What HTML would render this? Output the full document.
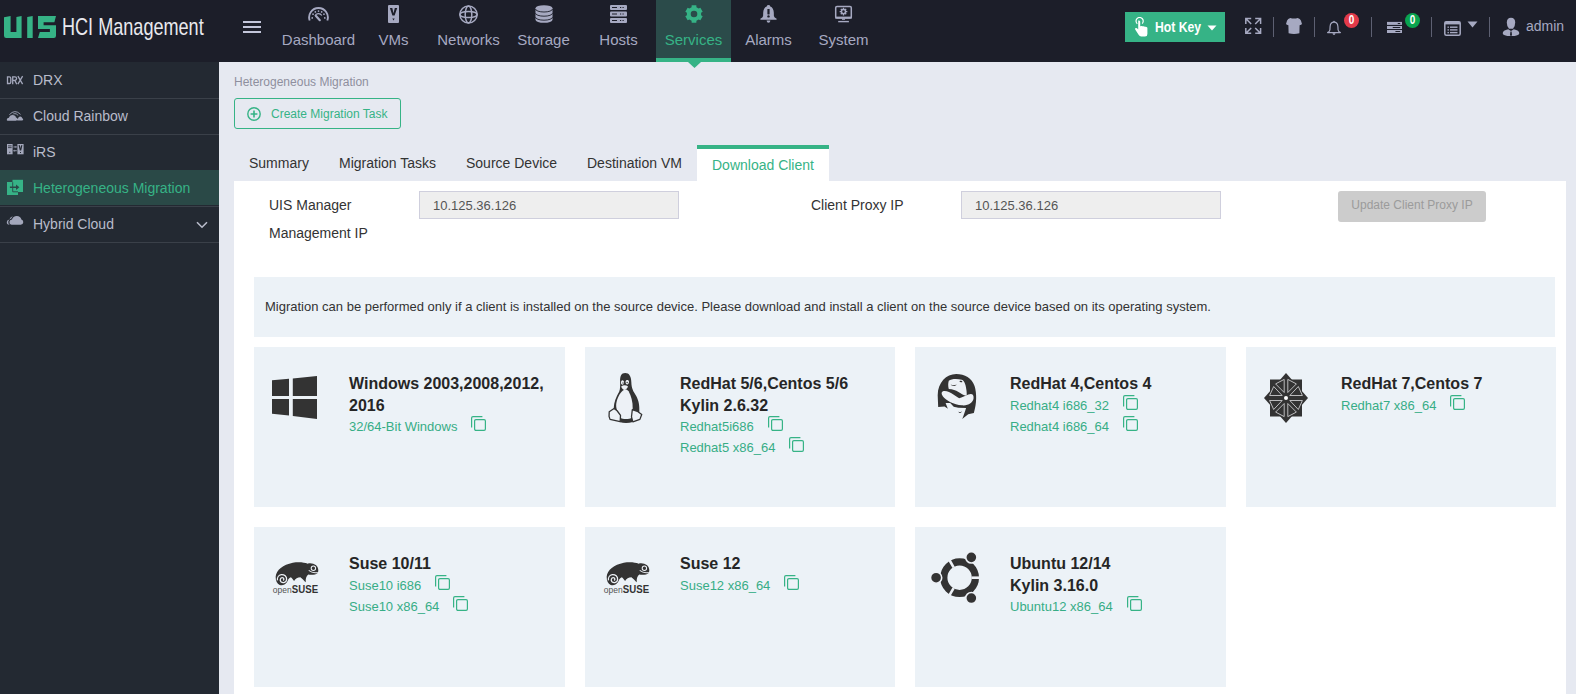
<!DOCTYPE html>
<html><head><meta charset="utf-8">
<style>
*{margin:0;padding:0;box-sizing:border-box}
html,body{width:1576px;height:694px;overflow:hidden;background:#e6e9f1;font-family:"Liberation Sans",sans-serif}
.a{position:absolute;white-space:nowrap}
#hdr{position:absolute;left:0;top:0;width:1576px;height:62px;background:#1c1e29}
#side{position:absolute;left:0;top:62px;width:219px;height:632px;background:#232932}
#vline{position:absolute;left:219px;top:62px;width:1px;height:632px;background:#f4f5f9}
.nav{position:absolute;top:32px;width:75px;text-align:center;font-size:15px;line-height:15px;color:#a6a9c1}
.ico{position:absolute}
.sep{position:absolute;top:17px;width:1px;height:20px;background:#5d6072}
.si{position:absolute;left:33px;font-size:14px;line-height:14px;color:#b9bccb}
.sl{position:absolute;left:0;width:219px;height:1px;background:#3a4049}
.tab{position:absolute;top:156px;font-size:14px;line-height:14px;color:#333}
.lbl{position:absolute;font-size:14px;line-height:14px;color:#333}
.inp{position:absolute;top:191px;width:260px;height:28px;background:#eeeeee;border:1px solid #cfcfdd}
.inp span{position:absolute;left:13px;top:7px;font-size:13px;line-height:13px;color:#555}
.card{position:absolute;width:311px;height:160px;background:#ecf2f7}
.ct{position:absolute;left:95px;font-size:16px;line-height:16px;font-weight:bold;color:#262626;white-space:nowrap}
.lk{position:absolute;left:95px;font-size:13px;line-height:13px;color:#37ad86;white-space:nowrap}
.lk svg{vertical-align:baseline;margin-left:14px;margin-top:-15px}
</style></head><body>
<div id="hdr"></div>
<!-- logo -->
<svg class="ico" style="left:4px;top:16px" width="52" height="22" viewBox="0 0 52 22">
<path fill="#36b386" d="M0 1.2 L6.6 0 L6.6 16 L12.4 16 L12.4 0.9 L17.6 0 L17.6 22 L2.2 22 Q0 22 0 19.8 Z"/>
<path fill="#36b386" d="M23.2 1 L28.7 0 L28.7 22 L23.2 22 Z"/>
<path fill="#36b386" d="M34 0 L52 0 L50.4 6.2 L39.6 6.2 L39.6 9.3 L52 9.3 L52 19.8 Q52 22 49.8 22 L34 22 L35.8 16 L45.9 16 L45.9 12.9 L34 12.9 Z"/>
</svg>
<div class="a" style="left:62px;top:16px;font-size:23.4px;line-height:23.4px;color:#e9e9ee;transform-origin:0 0;transform:scaleX(0.773)">HCI Management</div>
<!-- hamburger -->
<div class="ico" style="left:243px;top:21px;width:18px;height:2px;background:#c3c6da"></div>
<div class="ico" style="left:243px;top:26px;width:18px;height:2px;background:#c3c6da"></div>
<div class="ico" style="left:243px;top:31px;width:18px;height:2px;background:#c3c6da"></div>
<!-- services active -->
<div class="ico" style="left:656px;top:0;width:75px;height:58px;background:#2b4b4a"></div>
<div class="ico" style="left:656px;top:58px;width:75px;height:4px;background:#36b386"></div>
<svg class="ico" style="left:688px;top:62px" width="13" height="6" viewBox="0 0 13 6"><path d="M0 0 L13 0 L6.5 6 Z" fill="#36b386"/></svg>
<div class="nav" style="left:281px">Dashboard</div>
<div class="nav" style="left:356px">VMs</div>
<div class="nav" style="left:431px">Networks</div>
<div class="nav" style="left:506px">Storage</div>
<div class="nav" style="left:581px">Hosts</div>
<div class="nav" style="left:656px;color:#36b386">Services</div>
<div class="nav" style="left:731px">Alarms</div>
<div class="nav" style="left:806px">System</div>
<!-- dashboard icon -->
<svg class="ico" style="left:307px;top:5px" width="23" height="17" viewBox="0 0 23 17">
<path d="M2.71 15.55 A9.35 9.35 0 1 1 20.29 15.55" fill="none" stroke="#a6a9c1" stroke-width="1.9"/>
<g fill="#a6a9c1"><circle cx="5.22" cy="12.90" r="0.85"/><circle cx="6.04" cy="9.20" r="0.85"/><circle cx="8.35" cy="6.89" r="0.85"/><circle cx="11.50" cy="6.05" r="0.85"/><circle cx="14.65" cy="6.89" r="0.85"/><circle cx="16.96" cy="9.20" r="0.85"/><circle cx="17.78" cy="12.90" r="0.85"/></g>
<path d="M9 11 L12.8 15.2" stroke="#a6a9c1" stroke-width="2.2" stroke-linecap="round"/>
<path d="M7.93 11.05 A3.8 3.8 0 0 1 14.79 10.45" fill="none" stroke="#a6a9c1" stroke-width="1.2"/>
</svg>
<!-- VMs icon -->
<svg class="ico" style="left:388px;top:5px" width="11" height="18" viewBox="0 0 11 18">
<rect x="0" y="0" width="11" height="18" rx="1" fill="#a6a9c1"/>
<path d="M1.9 3.1 H4.3 L5.5 8.2 L6.8 3.1 H9.2 L6.6 10.5 H4.4 Z" fill="#1c1e29"/>
<path d="M4.3 13.6 H6.7 L5.5 15.6 Z" fill="#1c1e29"/>
</svg>
<!-- networks -->
<svg class="ico" style="left:459px;top:5px" width="19" height="19" viewBox="0 0 19 19">
<g fill="none" stroke="#a6a9c1" stroke-width="1.5">
<circle cx="9.5" cy="9.5" r="8.6"/><ellipse cx="9.5" cy="9.5" rx="3.3" ry="8.6"/><ellipse cx="9.5" cy="9.5" rx="8.6" ry="3"/>
</g></svg>
<!-- storage -->
<svg class="ico" style="left:535px;top:5px" width="18" height="18" viewBox="0 0 18 18">
<path fill="#a6a9c1" d="M0.5 3.2 A8.5 3 0 0 1 17.5 3.2 L17.5 14.8 A8.5 3 0 0 1 0.5 14.8 Z"/>
<g fill="none" stroke="#1c1e29" stroke-width="0.9"><path d="M0.5 4 A8.5 3 0 0 0 17.5 4"/><path d="M0.5 8.2 A8.5 3 0 0 0 17.5 8.2"/><path d="M0.5 12.2 A8.5 3 0 0 0 17.5 12.2"/></g>
</svg>
<!-- hosts -->
<svg class="ico" style="left:610px;top:5px" width="17" height="18" viewBox="0 0 17 18">
<g fill="#a6a9c1"><rect x="0" y="0" width="17" height="5" rx="1"/><rect x="0" y="6.5" width="17" height="5" rx="1"/><rect x="0" y="13" width="17" height="5" rx="1"/></g>
<g fill="#1c1e29"><rect x="2" y="2" width="5" height="1"/><rect x="10" y="2" width="1.2" height="1"/><rect x="12.5" y="2" width="1.2" height="1"/>
<rect x="2" y="8.5" width="5" height="1"/><rect x="10" y="8.5" width="1.2" height="1"/><rect x="12.5" y="8.5" width="1.2" height="1"/>
<rect x="2" y="15" width="5" height="1"/><rect x="10" y="15" width="1.2" height="1"/><rect x="12.5" y="15" width="1.2" height="1"/></g>
</svg>
<!-- services gear -->
<svg class="ico" style="left:684.5px;top:5px" width="18" height="18" viewBox="0 0 18 18"><path fill="#36b386" fill-rule="evenodd" d="M11.44 2.23 L11.33 0.31 L6.67 0.31 L6.56 2.23 L4.35 3.50 L2.64 2.64 L0.31 6.67 L1.91 7.72 L1.91 10.28 L0.31 11.33 L2.64 15.36 L4.35 14.50 L6.56 15.77 L6.67 17.69 L11.33 17.69 L11.44 15.77 L13.65 14.50 L15.36 15.36 L17.69 11.33 L16.09 10.28 L16.09 7.72 L17.69 6.67 L15.36 2.64 L13.65 3.50 Z M9.00 5.70 A3.30 3.30 0 1 0 9.00 12.30 A3.30 3.30 0 1 0 9.00 5.70 Z"/></svg>
<!-- alarms bell -->
<svg class="ico" style="left:759px;top:4px" width="19" height="20" viewBox="759 4 19 20">
<path fill="#a6a9c1" d="M768.5 5 Q770 5 770.3 6.4 Q773.6 7.6 773.8 12.5 L773.9 16 Q774.3 17.6 776.3 18.6 Q777.2 19.4 776.2 19.8 L760.8 19.8 Q759.8 19.4 760.7 18.6 Q762.7 17.6 763.1 16 L763.2 12.5 Q763.4 7.6 766.7 6.4 Q767 5 768.5 5 Z"/>
<path fill="#a6a9c1" d="M766.6 20.6 H770.4 Q770.2 22.8 768.5 22.8 Q766.8 22.8 766.6 20.6 Z"/>
<rect x="767.4" y="9" width="2.2" height="5.4" rx="0.4" fill="#1c1e29"/><circle cx="768.5" cy="16.4" r="1.2" fill="#1c1e29"/>
</svg>
<!-- system -->
<svg class="ico" style="left:834px;top:5px" width="20" height="19" viewBox="834 5 20 19">
<rect x="835.7" y="6.5" width="15.6" height="11.6" rx="1.3" fill="none" stroke="#a6a9c1" stroke-width="1.5"/>
<rect x="835.2" y="16.6" width="16.6" height="2" fill="#a6a9c1"/>
<rect x="842" y="18.4" width="3" height="1.4" fill="#a6a9c1"/>
<rect x="838.2" y="20.9" width="10.7" height="1.4" fill="#a6a9c1"/>
<path fill="#a6a9c1" fill-rule="evenodd" d="M844.19 8.78 L844.19 7.76 L842.81 7.76 L842.81 8.78 L841.99 9.12 L841.27 8.40 L840.30 9.37 L841.02 10.09 L840.68 10.91 L839.66 10.91 L839.66 12.29 L840.68 12.29 L841.02 13.11 L840.30 13.83 L841.27 14.80 L841.99 14.08 L842.81 14.42 L842.81 15.44 L844.19 15.44 L844.19 14.42 L845.01 14.08 L845.73 14.80 L846.70 13.83 L845.98 13.11 L846.32 12.29 L847.34 12.29 L847.34 10.91 L846.32 10.91 L845.98 10.09 L846.70 9.37 L845.73 8.40 L845.01 9.12 Z M843.50 10.30 A1.30 1.30 0 1 0 843.50 12.90 A1.30 1.30 0 1 0 843.50 10.30 Z"/>
</svg>
<!-- hot key -->
<div class="ico" style="left:1125px;top:12px;width:100px;height:30px;background:#36b386"></div>
<svg class="ico" style="left:1134px;top:17px" width="16" height="20" viewBox="0 0 16 20">
<path fill="none" stroke="#fff" stroke-width="1.2" d="M3.3 6.8 A3.6 3.6 0 1 1 8.2 6.6"/>
<path fill="#fff" d="M4.2 3.6 Q5.8 3.2 6.2 4.6 L6.2 9.2 Q7.5 8.6 8.6 9.3 Q10 8.8 11 9.8 Q12.6 9.5 13.4 10.8 L13.4 17 Q13.4 19.5 11 19.5 L7.2 19.5 Q5.6 19.5 4.6 17.8 L1.2 12.6 Q0.6 11.4 1.8 11 Q2.8 10.7 3.8 12 L4.2 12.6 Z"/>
</svg>
<div class="a" style="left:1155px;top:20px;font-size:14px;line-height:14px;font-weight:bold;color:#fff;transform-origin:0 0;transform:scaleX(0.87)">Hot Key</div>
<svg class="ico" style="left:1207px;top:25px" width="10" height="6" viewBox="0 0 10 6"><path d="M0.5 0.5 H9.5 L5 5.5 Z" fill="#fff"/></svg>
<!-- fullscreen -->
<svg class="ico" style="left:1244px;top:17px" width="19" height="19" viewBox="1244 17 19 19">
<g fill="none" stroke="#a6a9c1" stroke-width="1.5">
<path d="M1245.8 24 V18.6 H1251.2 M1246 18.8 L1251.2 24"/>
<path d="M1255.2 18.6 H1260.6 V24 M1260.4 18.8 L1255.2 24"/>
<path d="M1245.8 28 V33.3 H1251.2 M1246 33.1 L1251.2 28"/>
<path d="M1255.2 33.3 H1260.6 V28 M1260.4 33.1 L1255.2 28"/>
</g></svg>
<div class="sep" style="left:1273px"></div>
<!-- tshirt -->
<svg class="ico" style="left:1284px;top:16px" width="20" height="20" viewBox="1284 16 20 20">
<path fill="#a6a9c1" d="M1290.3 18 Q1294 19 1297.7 18 Q1300.2 18.6 1300.9 20.4 L1302 24 Q1301.4 25 1299.6 25.2 L1299.4 33.2 Q1294 34.6 1288.6 33.2 L1288.4 25.2 Q1286.6 25 1286 24 L1287.1 20.4 Q1287.8 18.6 1290.3 18 Z"/>
</svg>
<div class="sep" style="left:1314px"></div>
<!-- bell -->
<svg class="ico" style="left:1325px;top:19px" width="18" height="18" viewBox="1325 19 18 18">
<path fill="none" stroke="#a6a9c1" stroke-width="1.2" stroke-linejoin="round" d="M1334 22.2 Q1337.6 22.2 1337.9 26.5 L1338.1 30 Q1338.4 31.6 1340.4 32.6 L1327.6 32.6 Q1329.6 31.6 1329.9 30 L1330.1 26.5 Q1330.4 22.2 1334 22.2 Z"/>
<circle cx="1334" cy="21.5" r="0.8" fill="#a6a9c1"/>
<path fill="#a6a9c1" d="M1332.5 33.2 H1335.5 Q1335.3 35 1334 35 Q1332.7 35 1332.5 33.2 Z"/>
</svg>
<svg class="ico" style="left:1344px;top:13px" width="15" height="15" viewBox="0 0 15 15"><circle cx="7.5" cy="7.5" r="7.5" fill="#e33a49"/>
<text x="7.5" y="10.9" text-anchor="middle" font-family="Liberation Sans" font-weight="bold" font-size="12.5" fill="#fff" transform="translate(7.5 0) scale(0.8 1) translate(-7.5 0)">0</text></svg>
<div class="sep" style="left:1371px"></div>
<!-- server -->
<svg class="ico" style="left:1386px;top:20px" width="18" height="15" viewBox="1386 20 18 15">
<g fill="#a6a9c1"><rect x="1387" y="21.9" width="15" height="3"/><rect x="1387" y="26" width="15" height="3"/><rect x="1387" y="30" width="15" height="3"/></g>
<g fill="#1c1e29"><rect x="1397.6" y="22.9" width="2.8" height="1" rx="0.5"/><rect x="1392.6" y="27" width="7.8" height="1" rx="0.5"/><rect x="1395.3" y="31" width="5.1" height="1" rx="0.5"/></g>
</svg>
<svg class="ico" style="left:1405px;top:13px" width="15" height="15" viewBox="0 0 15 15"><circle cx="7.5" cy="7.5" r="7.5" fill="#0aa44f"/>
<text x="7.5" y="10.9" text-anchor="middle" font-family="Liberation Sans" font-weight="bold" font-size="12.5" fill="#fff" transform="translate(7.5 0) scale(0.8 1) translate(-7.5 0)">0</text></svg>
<div class="sep" style="left:1431px"></div>
<!-- window list -->
<svg class="ico" style="left:1444px;top:21px" width="17" height="15" viewBox="0 0 17 15">
<rect x="0.8" y="0.8" width="15.4" height="13.4" rx="1.5" fill="none" stroke="#a6a9c1" stroke-width="1.5"/>
<rect x="0.8" y="0.8" width="15.4" height="2.6" fill="#a6a9c1"/>
<g fill="#a6a9c1"><rect x="3.5" y="5.5" width="1.4" height="1.4"/><rect x="6" y="5.5" width="7.5" height="1.4"/><rect x="3.5" y="8.2" width="1.4" height="1.4"/><rect x="6" y="8.2" width="7.5" height="1.4"/><rect x="3.5" y="10.9" width="1.4" height="1.4"/><rect x="6" y="10.9" width="7.5" height="1.4"/></g>
</svg>
<svg class="ico" style="left:1467px;top:21px" width="11" height="7" viewBox="0 0 11 7"><path d="M0.5 0.5 H10.5 L5.5 6.5 Z" fill="#a6a9c1"/></svg>
<div class="sep" style="left:1489px"></div>
<!-- user -->
<svg class="ico" style="left:1502px;top:17px" width="18" height="20" viewBox="1502 17 18 20">
<path fill="#a6a9c1" d="M1511 17.8 Q1515.2 17.8 1515.2 22.5 Q1515.2 26.5 1513 28.8 L1509 28.8 Q1506.8 26.5 1506.8 22.5 Q1506.8 17.8 1511 17.8 Z"/>
<path fill="#a6a9c1" d="M1508.2 29.2 L1511 31 L1513.8 29.2 Q1519.3 30.2 1519.3 33.2 Q1519.3 36 1511 36 Q1502.7 36 1502.7 33.2 Q1502.7 30.2 1508.2 29.2 Z"/>
<path fill="#1c1e29" d="M1510.4 31.4 H1511.6 L1512 35.2 L1511 36 L1510 35.2 Z"/>
</svg>
<div class="a" style="left:1526px;top:19px;font-size:14px;line-height:14px;color:#a6a9c1">admin</div>

<div id="side"></div>
<!-- sidebar -->
<div class="sl" style="top:98px"></div>
<div class="sl" style="top:134px"></div>
<div class="sl" style="top:170px"></div>
<div class="sl" style="top:206px"></div>
<div class="sl" style="top:242px"></div>
<div class="ico" style="left:0;top:170px;width:219px;height:35px;background:#2a4947"></div>
<svg class="ico" style="left:6px;top:75px" width="18" height="10" viewBox="6 75 18 10">
<g fill="none" stroke="#a3a7bb" stroke-width="1.3">
<path d="M7.5 76.8 H9.3 Q10.8 76.8 10.8 78.4 V81.9 Q10.8 83.5 9.3 83.5 H7.5 Z"/>
<path d="M12.7 84.2 V76.8 H14.9 Q16.6 76.8 16.6 78.6 Q16.6 80.4 14.9 80.4 H12.7 M14.8 80.4 L16.8 84.2"/>
<path d="M17.9 76.2 L22.6 84.2 M22.6 76.2 L17.9 84.2"/>
</g></svg>
<div class="si" style="top:73px">DRX</div>
<svg class="ico" style="left:6px;top:109px" width="18" height="13" viewBox="6 109 18 13">
<g fill="none" stroke="#a3a7bb" stroke-width="0.9"><path d="M9.3 114.8 Q14.9 108.6 20.5 114.4"/><path d="M11.6 115.6 Q14.9 111.6 18.3 115.6"/></g>
<path fill="#232932" d="M6 121.6 Q5.6 117.5 8.5 117 Q9.5 114 12.7 114.2 Q15.5 114.4 16.3 116.8 Q17.5 115.6 19.8 115.6 Q22.2 115.8 22.8 118 Q24 118.6 24 120 L24 121.6 Z"/>
<path fill="#a3a7bb" d="M7.8 120.8 Q6.6 120.8 6.8 119.4 Q7 117.9 8.9 117.8 Q9.6 115 12.6 114.9 Q15.6 115 16 117.6 Q17.5 117.8 17.2 119.5 Q17 120.8 15.6 120.8 Z"/>
<path fill="#a3a7bb" d="M17.5 120.5 Q16.5 120.4 16.7 119.3 Q17 118.4 18 118.4 Q18.6 116.3 20.2 116.4 Q22 116.5 22.2 118.3 Q23.3 118.5 23.2 119.5 Q23 120.5 22 120.5 Z"/>
</svg>
<div class="si" style="top:109px">Cloud Rainbow</div>
<svg class="ico" style="left:7px;top:144px" width="17" height="11" viewBox="0 0 17 11">
<rect x="0" y="0" width="5.6" height="10.3" fill="#a3a7bb"/>
<g fill="#232932"><rect x="1" y="1.5" width="3.6" height="0.8"/><rect x="1" y="3.3" width="3.6" height="0.8"/><rect x="2.3" y="7.8" width="1" height="1"/></g>
<rect x="10.4" y="0" width="6.2" height="10.3" fill="#a3a7bb"/>
<path d="M11.6 1.2 H12.9 L13.5 4.6 L14.1 1.2 H15.4 L14.2 6.5 H12.8 Z" fill="#232932"/>
<rect x="13" y="8" width="1" height="1" fill="#232932"/>
<g fill="#a3a7bb"><rect x="6.5" y="2.5" width="3" height="0.9"/><path d="M9.8 2.95 L8.6 1.8 V4.1 Z"/><rect x="6.8" y="6.3" width="3" height="0.9"/><path d="M6.2 6.75 L7.4 5.6 V7.9 Z"/></g>
</svg>
<div class="si" style="top:145px">iRS</div>
<svg class="ico" style="left:7px;top:179px" width="17" height="17" viewBox="0 0 17 17">
<rect x="0" y="3" width="11" height="13" fill="#36b386"/>
<rect x="5.5" y="0.8" width="10.5" height="12.2" fill="#36b386"/>
<path d="M5.7 3.2 V12.8 H11" fill="none" stroke="#2a4947" stroke-width="0.9"/>
<path d="M2.9 7.6 H9 V5.6 L12.4 8.3 L9 11 V9 H2.9 Z" fill="#2a4947"/>
</svg>
<div class="si" style="top:181px;color:#36b386">Heterogeneous Migration</div>
<svg class="ico" style="left:6px;top:214px" width="18" height="12" viewBox="6 214 18 12">
<path fill="#a3a7bb" d="M9.3 224.7 Q6.6 224.7 6.8 222 Q7 219.6 9.5 219.4 Q10.4 216.2 13.4 216.4 L11.5 224.7 Z"/>
<path fill="#232932" d="M11.2 225.5 Q8 225.2 8.3 221.6 Q8.7 218.8 11.2 218.4 Q12.6 215.2 16.6 215.2 L14 225.5 Z"/>
<path fill="#a3a7bb" d="M11.6 224.7 Q9.3 224.5 9.4 222 Q9.6 219.6 12 219.4 Q13 216 16.8 215.9 Q20.6 216 21.4 219.4 Q23.4 219.9 23.3 222.2 Q23.1 224.6 20.8 224.7 Z"/>
</svg>
<div class="si" style="top:217px">Hybrid Cloud</div>
<svg class="ico" style="left:196px;top:221px" width="12" height="8" viewBox="0 0 12 8"><path d="M1 1.2 L6 6.2 L11 1.2" fill="none" stroke="#b9bccb" stroke-width="1.6"/></svg>


<!-- content -->
<div class="a" style="left:234px;top:76px;font-size:12px;line-height:12px;color:#8e8f9e">Heterogeneous Migration</div>
<div class="ico" style="left:234px;top:98px;width:167px;height:31px;border:1px solid #36b386;border-radius:3px"></div>
<svg class="ico" style="left:247px;top:107px" width="14" height="14" viewBox="0 0 14 14"><circle cx="7" cy="7" r="6.2" fill="none" stroke="#36b386" stroke-width="1.4"/><path d="M7 3.6 V10.4 M3.6 7 H10.4" stroke="#36b386" stroke-width="1.6"/></svg>
<div class="a" style="left:271px;top:108px;font-size:12px;line-height:12px;color:#36b386">Create Migration Task</div>
<div class="tab" style="left:249px">Summary</div>
<div class="tab" style="left:339px">Migration Tasks</div>
<div class="tab" style="left:466px">Source Device</div>
<div class="tab" style="left:587px">Destination VM</div>
<div class="ico" style="left:697px;top:145px;width:132px;height:36px;background:#fff;border-top:4px solid #36b386"></div>
<div class="tab" style="left:712px;top:158px;color:#36b386">Download Client</div>
<div class="ico" style="left:234px;top:181px;width:1332px;height:513px;background:#fff"></div>
<div class="lbl" style="left:269px;top:198px">UIS Manager</div>
<div class="lbl" style="left:269px;top:226px">Management IP</div>
<div class="inp" style="left:419px"><span>10.125.36.126</span></div>
<div class="lbl" style="left:811px;top:198px">Client Proxy IP</div>
<div class="inp" style="left:961px"><span>10.125.36.126</span></div>
<div class="ico" style="left:1338px;top:191px;width:148px;height:31px;background:#cccccc;border-radius:3px"></div>
<div class="a" style="left:1338px;top:199px;width:148px;text-align:center;font-size:12px;line-height:12px;color:#9b9b9b">Update Client Proxy IP</div>
<div class="ico" style="left:254px;top:277px;width:1301px;height:60px;background:#ecf2f7"></div>
<div class="a" style="left:265px;top:300px;font-size:13px;line-height:13px;color:#333">Migration can be performed only if a client is installed on the source device. Please download and install a client on the source device based on its operating system.</div>

<!-- cards -->
<svg width="0" height="0" style="position:absolute">
<defs>
<symbol id="cp" viewBox="0 0 15 15"><path d="M0.6 11.5 V2 Q0.6 0.6 2 0.6 H11.4" fill="none" stroke="#36b386" stroke-width="1.2"/><rect x="3.6" y="3.6" width="10.8" height="10.8" rx="1.3" fill="none" stroke="#36b386" stroke-width="1.2"/></symbol>
</defs></svg>
<div class="card" style="left:254px;top:347px">
<svg class="ico" style="left:18px;top:29px" width="45" height="43" viewBox="0 0 45 43"><g fill="#333">
<path d="M0 4.2 L17 2.8 L17 20 L0 20 Z"/><path d="M20.8 2.5 L45 0 L45 20 L20.8 20 Z"/>
<path d="M0 23 L17 23 L17 39.5 L0 37.8 Z"/><path d="M20.8 23 L45 23 L45 43 L20.8 40 Z"/></g></svg>
<div class="ct" style="top:29px">Windows 2003,2008,2012,</div>
<div class="ct" style="top:51px">2016</div>
<div class="lk" style="top:73px">32/64-Bit Windows<svg width="15" height="15"><use href="#cp"/></svg></div>
</div>
<div class="card" style="left:585px;top:347px;width:310px">
<svg class="ico" style="left:20px;top:23px" width="42" height="56" viewBox="0 0 520 694">
<path fill="#333" d="M250 38 C200 38 185 80 187 140 C188 200 190 230 175 270 C140 330 110 400 108 470 L120 520 L425 530 C430 440 418 380 385 320 C350 265 328 230 326 150 C325 80 300 38 250 38 Z"/>
<path fill="#edf1f6" d="M232 248 C185 280 145 350 138 430 C135 510 180 575 250 580 C310 582 340 545 343 470 C345 400 325 320 292 262 C275 240 250 238 232 248 Z"/>
<path fill="#edf1f6" d="M198 165 C195 130 215 118 232 135 C240 150 232 175 220 182 C210 185 200 178 198 165 Z M255 140 C262 118 290 118 297 140 C300 160 288 178 275 180 C262 178 252 160 255 140 Z"/>
<path fill="#333" d="M215 160 C215 148 228 148 230 160 C228 172 217 172 215 160 Z M265 155 C265 143 282 143 283 155 C282 168 267 168 265 155 Z"/>
<path fill="#edf1f6" d="M200 205 C225 185 262 185 285 205 C275 232 252 248 238 248 C222 244 208 228 200 205 Z"/>
<path fill="#333" d="M180 590 C230 615 290 615 340 590 L345 645 C290 660 230 660 180 645 Z"/>
<path fill="#edf1f6" stroke="#333" stroke-width="16" stroke-linejoin="round" d="M52 518 L112 478 L150 505 L192 562 L188 640 L62 612 L50 575 Z"/>
<path fill="#edf1f6" stroke="#333" stroke-width="16" stroke-linejoin="round" d="M338 492 L400 512 L455 552 L432 612 L345 642 L328 580 Z"/>
</svg>
<div class="ct" style="top:29px">RedHat 5/6,Centos 5/6</div>
<div class="ct" style="top:51px">Kylin 2.6.32</div>
<div class="lk" style="top:73px">Redhat5i686<svg width="15" height="15"><use href="#cp"/></svg></div>
<div class="lk" style="top:94px">Redhat5 x86_64<svg width="15" height="15"><use href="#cp"/></svg></div>
</div>
<div class="card" style="left:915px;top:347px">
<svg class="ico" style="left:20px;top:25px" width="45" height="49" viewBox="0 0 637 694">
<path fill="#333" d="M300 30 C160 30 40 150 38 330 L45 495 L135 488 L182 522 L150 440 L215 440 L265 492 L330 508 L440 510 C425 560 405 620 385 665 L470 600 L550 580 C592 450 592 300 560 200 C522 90 422 30 300 30 Z"/>
<path fill="#edf1f6" d="M195 125 C232 95 302 92 380 108 C422 122 440 200 446 262 C449 300 452 322 446 338 C402 326 362 300 332 282 C292 258 252 242 195 240 C184 205 184 162 195 125 Z"/>
<path fill="#edf1f6" d="M95 295 C98 262 150 262 198 282 C240 302 302 345 342 372 C382 360 432 340 472 320 C522 300 552 322 546 372 C540 432 470 482 380 472 C270 462 150 402 110 342 C96 322 92 307 95 292 Z"/>
<path fill="#333" d="M222 172 C250 196 282 190 305 178 C292 204 248 212 222 172 Z M345 132 C360 120 382 125 388 140 C372 150 352 148 345 132 Z M328 560 C345 572 365 570 380 555 C372 585 340 588 328 560 Z"/>
</svg>
<div class="ct" style="top:29px">RedHat 4,Centos 4</div>
<div class="lk" style="top:52px">Redhat4 i686_32<svg width="15" height="15"><use href="#cp"/></svg></div>
<div class="lk" style="top:73px">Redhat4 i686_64<svg width="15" height="15"><use href="#cp"/></svg></div>
</div>
<div class="card" style="left:1246px;top:347px;width:310px">
<svg class="ico" style="left:18px;top:26px" width="44" height="50" viewBox="0 0 44 50">
<g fill="#333"><rect x="6" y="6.5" width="32" height="37"/><path d="M22 0 L44 25 L22 50 L0 25 Z"/></g>
<path fill="none" stroke="#c9cacc" stroke-width="0.9" stroke-linejoin="miter" d="M20.2 6.4 L11.6 10.9 L20.2 19.5 Z M5.6 22.5 L9.7 13.5 L18.2 22.5 Z M20.2 43.6 L11.6 39.1 L20.2 30.5 Z M5.6 27.5 L9.7 36.5 L18.2 27.5 Z M23.8 6.4 L32.4 10.9 L23.8 19.5 Z M38.4 22.5 L34.3 13.5 L25.8 22.5 Z M23.8 43.6 L32.4 39.1 L23.8 30.5 Z M38.4 27.5 L34.3 36.5 L25.8 27.5 Z"/>
<circle cx="22" cy="25" r="2" fill="#fff"/>
</svg>
<div class="ct" style="top:29px">RedHat 7,Centos 7</div>
<div class="lk" style="top:52px">Redhat7 x86_64<svg width="15" height="15"><use href="#cp"/></svg></div>
</div>
<div class="card" style="left:254px;top:527px">
<svg class="ico" style="left:14px;top:28px" width="57" height="45" viewBox="0 0 879 694" id="suse">
<path fill="#333" d="M118 335 C128 232 232 150 382 120 C472 104 560 114 612 134 C645 118 705 128 742 160 C778 192 782 242 770 272 C740 302 680 312 622 302 C592 322 578 362 582 420 C560 400 530 362 500 342 C458 342 420 362 402 402 C386 382 372 352 352 342 C322 352 302 392 292 422 C262 462 222 472 180 462 C140 442 118 402 118 335 Z"/>
<path fill="none" stroke="#edf1f6" stroke-width="20" d="M232 392 C252 382 248 350 220 350 C190 350 178 390 200 412 C232 442 282 422 287 380 C292 330 250 298 205 303 C165 310 140 350 145 392"/>
<circle cx="700" cy="205" r="34" fill="none" stroke="#edf1f6" stroke-width="16"/>
<path fill="none" stroke="#edf1f6" stroke-width="16" d="M628 238 C670 270 725 280 768 268"/>
<text x="75" y="590" font-family="Liberation Sans" font-size="150" fill="#555" textLength="290" lengthAdjust="spacingAndGlyphs">open</text>
<text x="368" y="590" font-family="Liberation Sans" font-weight="bold" font-size="165" fill="#333" textLength="405" lengthAdjust="spacingAndGlyphs">SUSE</text>
</svg>
<div class="ct" style="top:29px">Suse 10/11</div>
<div class="lk" style="top:52px">Suse10 i686<svg width="15" height="15"><use href="#cp"/></svg></div>
<div class="lk" style="top:73px">Suse10 x86_64<svg width="15" height="15"><use href="#cp"/></svg></div>
</div>
<div class="card" style="left:585px;top:527px;width:310px">
<svg class="ico" style="left:14px;top:28px" width="57" height="45" viewBox="0 0 57 45"><use href="#suse"/></svg>
<div class="ct" style="top:29px">Suse 12</div>
<div class="lk" style="top:52px">Suse12 x86_64<svg width="15" height="15"><use href="#cp"/></svg></div>
</div>
<div class="card" style="left:915px;top:527px">
<svg class="ico" style="left:15px;top:25px" width="50" height="51" viewBox="0 0 50 51">
<g transform="translate(29.6 25.7)">
<circle r="15.8" fill="none" stroke="#333" stroke-width="7.2"/>
<g stroke="#edf1f6" stroke-width="2.6"><path d="M12 0 H21"/><path d="M-6 10.4 L-10.5 18.2"/><path d="M-6 -10.4 L-10.5 -18.2"/></g>
<g fill="#333" stroke="#edf1f6" stroke-width="1.6"><circle cx="-23.5" cy="0" r="5.6"/><circle cx="11.75" cy="-20.35" r="5.6"/><circle cx="11.75" cy="20.35" r="5.6"/></g>
</g></svg>
<div class="ct" style="top:29px">Ubuntu 12/14</div>
<div class="ct" style="top:51px">Kylin 3.16.0</div>
<div class="lk" style="top:73px">Ubuntu12 x86_64<svg width="15" height="15"><use href="#cp"/></svg></div>
</div>
</body></html>
